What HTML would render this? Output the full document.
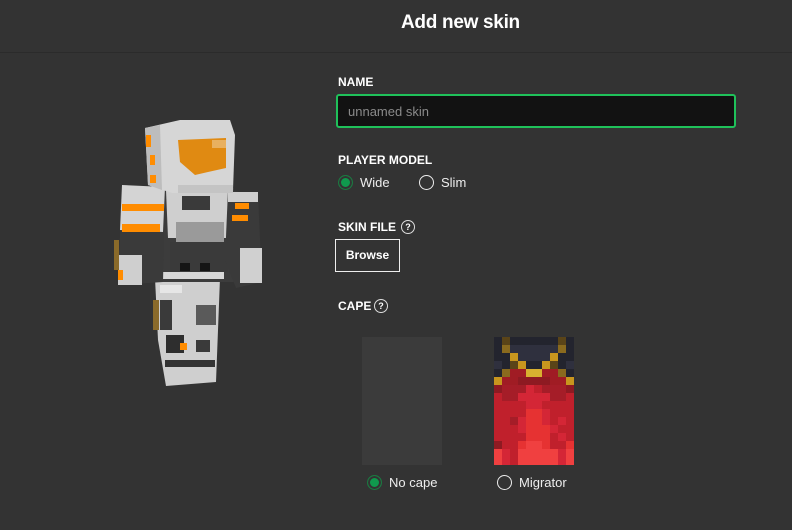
<!DOCTYPE html>
<html><head><meta charset="utf-8"><style>
*{margin:0;padding:0;box-sizing:border-box}
body{width:792px;height:530px;background:#333333;font-family:"Liberation Sans",sans-serif;color:#fff;position:relative;overflow:hidden}
.hdr{position:absolute;left:0;top:0;width:792px;height:53px;border-bottom:1px solid #2b2b2b}
.hdr h1{position:absolute;left:401px;top:12px;font-size:19px;font-weight:bold;letter-spacing:-0.3px;white-space:nowrap}
.lbl{position:absolute;font-size:12px;font-weight:bold;left:338px}
.inp{position:absolute;left:336px;top:94px;width:400px;height:34px;background:#121212;border:2px solid #1fc15a;border-radius:3px;color:#8a8a8a;font-size:13px;padding:8px 10px}
.rad{position:absolute;width:15px;height:15px;border:1.5px solid #eee;border-radius:50%}
.rad.on{border-color:#1b7a41;background:#0f9a4d;box-shadow:inset 0 0 0 2px #333}
.t{position:absolute;font-size:13px;color:#eee}
.q{position:absolute;width:14px;height:14px;border:1px solid #ddd;border-radius:50%;font-size:9px;font-weight:bold;text-align:center;line-height:12px}
.btn{position:absolute;left:335px;top:239px;width:65px;height:33px;border:1px solid #eee;font-size:12px;font-weight:bold;text-align:center;line-height:31px}
</style></head><body>
<div class="hdr"><h1>Add new skin</h1></div>

<svg style="position:absolute;left:0;top:0" width="300" height="400">
<!-- legs -->
<polygon points="155,278 220,278 216,382 166,386 158,340" fill="#cfcfcf"/>
<rect x="160" y="285" width="22" height="8" fill="#e6e6e6"/>
<rect x="160" y="300" width="12" height="30" fill="#3a3a3a"/>
<rect x="196" y="305" width="20" height="20" fill="#5a5a5a"/>
<rect x="166" y="335" width="18" height="18" fill="#2e2e2e"/>
<rect x="196" y="340" width="14" height="12" fill="#3a3a3a"/>
<rect x="180" y="343" width="7" height="7" fill="#ff8c00"/>
<rect x="165" y="360" width="50" height="7" fill="#333"/>
<rect x="153" y="300" width="6" height="30" fill="#8a6a2a"/>
<!-- torso -->
<polygon points="160,190 234,188 238,282 156,282" fill="#3c3c3c"/>
<polygon points="166,190 230,190 228,238 168,238" fill="#cfcfcf"/>
<rect x="182" y="196" width="28" height="14" fill="#3a3a3a"/>
<rect x="176" y="222" width="48" height="20" fill="#9a9a9a"/>
<rect x="170" y="242" width="58" height="30" fill="#3a3a3a"/>
<rect x="180" y="263" width="10" height="8" fill="#151515"/>
<rect x="200" y="263" width="10" height="8" fill="#151515"/>
<rect x="156" y="272" width="68" height="7" fill="#d8d8d8"/>
<!-- right arm (viewer left) -->
<polygon points="122,185 165,187 163,282 118,285" fill="#3a3a3a"/>
<polygon points="122,185 165,187 163,232 120,230" fill="#d4d4d4"/>
<rect x="122" y="204" width="42" height="7" fill="#ff8c00"/>
<rect x="122" y="224" width="38" height="8" fill="#ff8c00"/>
<rect x="118" y="255" width="24" height="30" fill="#cfcfcf"/>
<rect x="114" y="240" width="5" height="30" fill="#8a6a2a"/>
<rect x="118" y="270" width="5" height="10" fill="#ff8c00"/>
<!-- left arm -->
<polygon points="228,190 258,195 262,282 236,288 225,260" fill="#3a3a3a"/>
<rect x="228" y="192" width="30" height="10" fill="#cfcfcf"/>
<rect x="235" y="203" width="14" height="6" fill="#ff8c00"/>
<rect x="232" y="215" width="16" height="6" fill="#ff8c00"/>
<rect x="240" y="248" width="22" height="35" fill="#d0d0d0"/>
<!-- head -->
<polygon points="145,128 180,120 230,120 235,135 233,190 200,193 172,193 148,185" fill="#d6d6d6"/>
<polygon points="145,128 160,125 162,190 148,185" fill="#bdbdbd"/>
<rect x="146" y="135" width="5" height="12" fill="#ff8c00"/>
<rect x="150" y="155" width="5" height="10" fill="#ff8c00"/>
<rect x="150" y="175" width="6" height="8" fill="#ff8c00"/>
<polygon points="178,140 226,138 226,168 208,172 195,175 180,162" fill="#e08a12"/>
<rect x="212" y="140" width="14" height="8" fill="#e8b060"/>
<rect x="178" y="185" width="55" height="8" fill="#c4c4c4"/>
</svg>

<div class="lbl" style="top:75px">NAME</div>
<div class="inp">unnamed skin</div>

<div class="lbl" style="top:153px">PLAYER MODEL</div>
<div class="rad on" style="left:338px;top:175px"></div><div class="t" style="left:360px;top:175px">Wide</div>
<div class="rad" style="left:419px;top:175px"></div><div class="t" style="left:441px;top:175px">Slim</div>

<div class="lbl" style="top:220px">SKIN FILE</div><div class="q" style="left:401px;top:220px">?</div>
<div class="btn">Browse</div>

<div class="lbl" style="top:299px">CAPE</div><div class="q" style="left:374px;top:299px">?</div>

<div style="position:absolute;left:362px;top:337px;width:80px;height:128px;background:#3b3b3b"></div>
<svg id="cape" style="position:absolute;left:494px;top:337px" width="80" height="128"></svg>

<div class="rad on" style="left:367px;top:475px"></div><div class="t" style="left:389px;top:475px">No cape</div>
<div class="rad" style="left:497px;top:475px"></div><div class="t" style="left:519px;top:475px">Migrator</div>

<script>
var C={d:"#23242e",n:"#2f303e",G:"#5a4418",g:"#8a6a1e",Y:"#c8961e",y:"#d8b030",a:"#8e1a22",b:"#a01c24",c:"#a51d28",e:"#c0202c",f:"#d42636",o:"#e63232",p:"#f04040"};
var R=["dGddddddGd","dgnnnnnngd","ddYnnnnYdd","ndGYddYGdn","dgbbyybbgd","YbbaaaabbY","acccfeccca","eccffffcce","eeeeffeeee","eeeeoofeee","eecfoofefe","eeefooofee","eeeeoooefe","aeeoppoeeo","pfepppppfp","pfepppppfp"];
var s="";for(var r=0;r<16;r++)for(var c=0;c<10;c++){var k=R[r][c]||"e";s+='<rect x="'+c*8+'" y="'+r*8+'" width="8" height="8" fill="'+(C[k]||"#c0202c")+'"/>';}
document.getElementById("cape").innerHTML=s;
</script>
</body></html>
